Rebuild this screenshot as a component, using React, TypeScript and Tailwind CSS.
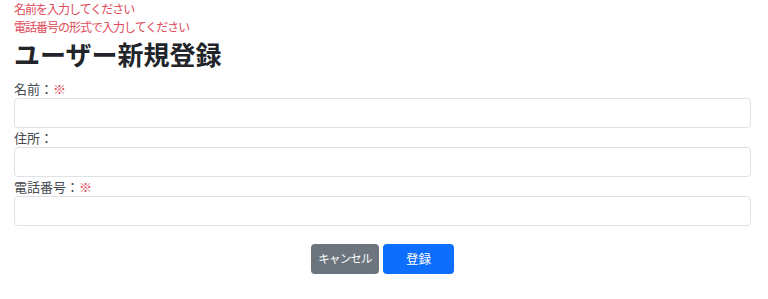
import React from "react";

const font = { fontFamily: '"Noto Sans CJK JP", "Noto Sans", sans-serif' };

function Field({ label, required }: { label: string; required?: boolean }) {
  return (
    <div>
      <label className="block text-[13px] leading-[19px] text-[#45494e]">
        {label}
        {required && <span className="text-[#e04b59]">※</span>}
      </label>
      <input
        type="text"
        className="block w-full h-[30px] rounded-[4px] border border-[#dee2e6] bg-white px-3 text-[13px] outline-none"
      />
    </div>
  );
}

export default function App() {
  return (
    <div className="min-h-[299px] w-full bg-white pl-[14px] pr-[17px]" style={font}>
      <div className="text-[12px] leading-[18px] tracking-[-1px] text-[#e04b59]">
        <div>名前を入力してください</div>
        <div>電話番号の形式で入力してください</div>
      </div>
      <h3 className="mt-[2px] mb-[10px] text-[26px] leading-[31px] font-bold text-[#212529]">
        ユーザー新規登録
      </h3>
      <Field label="名前：" required />
      <Field label="住所：" />
      <Field label="電話番号：" required />
      <div className="mt-[18px] flex justify-center gap-[4px]">
        <button className="h-[30px] w-[68px] rounded-[4px] bg-[#6c757d] text-[11.5px] tracking-[-0.8px] text-white">
          キャンセル
        </button>
        <button className="h-[30px] w-[71px] rounded-[4px] bg-[#0d6efd] text-[12.5px] text-white">
          登録
        </button>
      </div>
    </div>
  );
}
